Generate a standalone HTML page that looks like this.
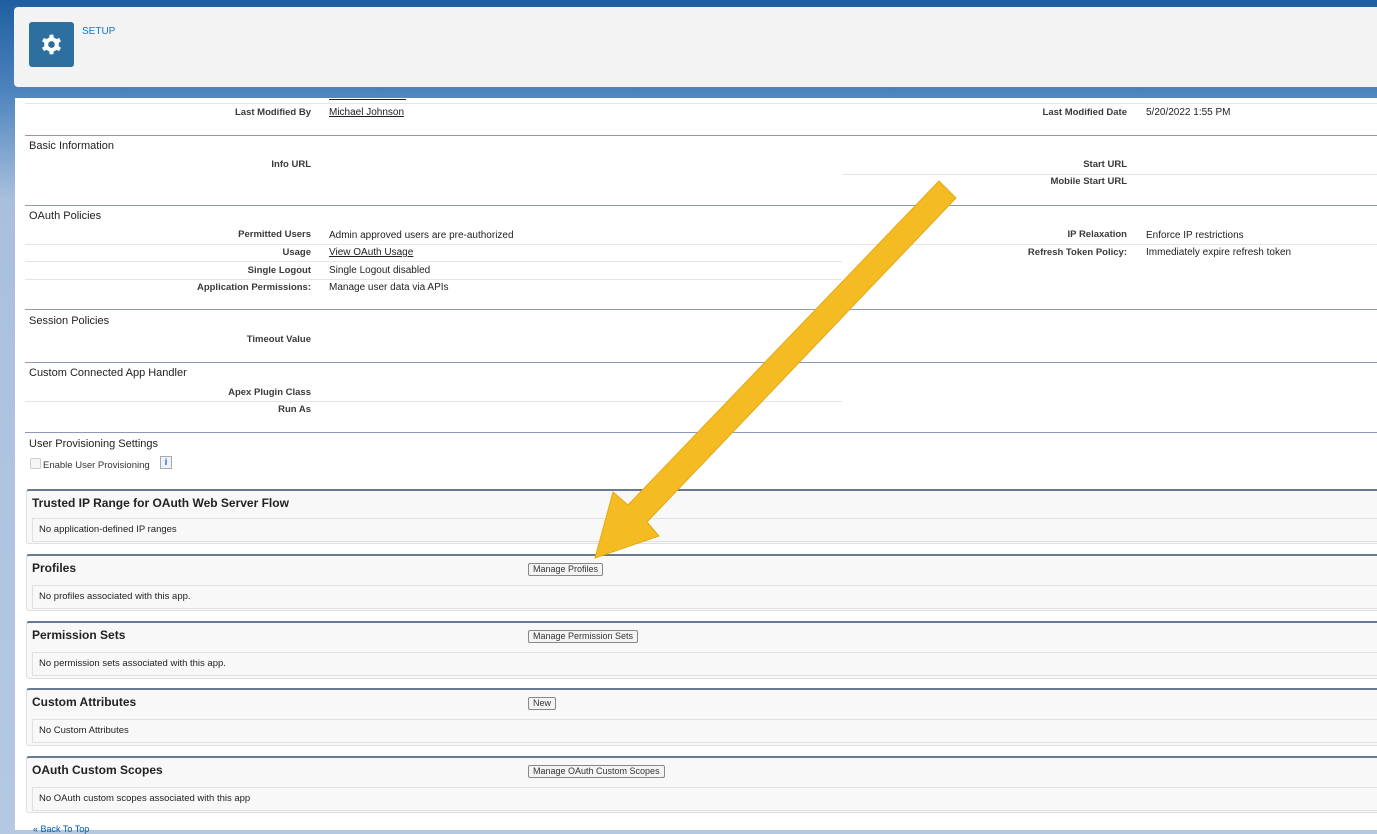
<!DOCTYPE html>
<html><head><style>
*{margin:0;padding:0;box-sizing:border-box}
html{background:#b4c8e2}
body{width:1377px;height:830px;overflow:hidden;position:relative;font-family:"Liberation Sans",Arial,sans-serif;font-size:10px;color:#222;
background:linear-gradient(180deg,#1e5f9f 0px,#4c83bd 90px,#a9c0dd 200px,#b4c8e2 830px)}
.a{position:absolute;white-space:nowrap}
.hdr{position:absolute;left:14px;top:7px;width:1370px;height:80px;background:#f3f3f3;border-radius:4px}
.panel{position:absolute;left:15px;top:98px;width:1370px;height:732px;background:#fff}
.lbl{position:absolute;text-align:right;color:#3a3a3a;font-size:9.5px;white-space:nowrap;font-weight:bold}
.val{position:absolute;font-size:10px;white-space:nowrap;color:#222}
.sec{position:absolute;left:25px;right:0;border-top:1px solid #8b9ab8}
.st{position:absolute;left:29px;font-size:11px;color:#222}
.rl{position:absolute;height:1px;background:#e4e4e4}
.box{position:absolute;left:26px;width:1360px;background:#f8f8f8;border:1px solid #e0e0e0;border-top:2px solid #6b7891;border-radius:3px}
.box h3{position:absolute;left:5px;top:5px;font-size:12px;font-weight:bold;color:#222}
.box .in{position:absolute;left:5px;right:0;top:27px;height:24px;border:1px solid #e0e0e0;background:#f8f8f8;font-size:9.5px;padding:5px 6px}
.btn{position:absolute;left:501px;top:7px;height:13px;border:1px solid #888;border-radius:2px;background:#f4f4f4;font-size:9px;padding:0 4px;line-height:11px;color:#333;white-space:nowrap}
u{text-decoration:underline}
</style></head><body>
<div class="hdr">
 <div class="a" style="left:15px;top:15px;width:45px;height:45px;background:#2d6f9f;border-radius:3px"></div>
 <svg class="a" style="left:25px;top:25px" width="25" height="25" viewBox="0 0 24 24">
  <g fill="#fff">
   <rect x="10" y="2.5" width="4" height="19" rx="1"/>
   <rect x="10" y="2.5" width="4" height="19" rx="1" transform="rotate(60 12 12)"/>
   <rect x="10" y="2.5" width="4" height="19" rx="1" transform="rotate(120 12 12)"/>
   <circle cx="12" cy="12" r="7"/>
  </g>
  <circle cx="12" cy="12" r="3.2" fill="#2d6f9f"/>
 </svg>
 <div class="a" style="left:68px;top:19px;color:#1a78c2;font-size:10px">SETUP</div>
</div>
<div class="panel"></div>
<div class="a" style="left:329px;top:99px;width:77px;height:1px;background:#222"></div>
<div class="rl" style="left:25px;right:0;top:103px"></div>
<div class="lbl" style="right:1066px;top:107px">Last Modified By</div>
<div class="val" style="left:329px;top:107px"><u>Michael Johnson</u></div>
<div class="lbl" style="right:250px;top:107px">Last Modified Date</div>
<div class="val" style="left:1146px;top:107px">5/20/2022 1:55 PM</div>

<div class="sec" style="top:135px"></div>
<div class="st" style="top:140px">Basic Information</div>
<div class="lbl" style="right:1066px;top:159px">Info URL</div>
<div class="lbl" style="right:250px;top:159px">Start URL</div>
<div class="rl" style="left:842px;right:0;top:174px"></div>
<div class="lbl" style="right:250px;top:176px">Mobile Start URL</div>

<div class="sec" style="top:205px"></div>
<div class="st" style="top:210px">OAuth Policies</div>
<div class="lbl" style="right:1066px;top:229px">Permitted Users</div>
<div class="val" style="left:329px;top:230px">Admin approved users are pre-authorized</div>
<div class="rl" style="left:25px;width:817px;top:244px"></div>
<div class="lbl" style="right:1066px;top:247px">Usage</div>
<div class="val" style="left:329px;top:247px"><u>View OAuth Usage</u></div>
<div class="rl" style="left:25px;width:817px;top:261px"></div>
<div class="lbl" style="right:1066px;top:265px">Single Logout</div>
<div class="val" style="left:329px;top:265px">Single Logout disabled</div>
<div class="rl" style="left:25px;width:817px;top:279px"></div>
<div class="lbl" style="right:1066px;top:282px">Application Permissions:</div>
<div class="val" style="left:329px;top:282px">Manage user data via APIs</div>
<div class="lbl" style="right:250px;top:229px">IP Relaxation</div>
<div class="val" style="left:1146px;top:230px">Enforce IP restrictions</div>
<div class="rl" style="left:842px;right:0;top:244px"></div>
<div class="lbl" style="right:250px;top:247px">Refresh Token Policy:</div>
<div class="val" style="left:1146px;top:247px">Immediately expire refresh token</div>

<div class="sec" style="top:309px"></div>
<div class="st" style="top:315px">Session Policies</div>
<div class="lbl" style="right:1066px;top:334px">Timeout Value</div>

<div class="sec" style="top:362px"></div>
<div class="st" style="top:367px">Custom Connected App Handler</div>
<div class="lbl" style="right:1066px;top:387px">Apex Plugin Class</div>
<div class="rl" style="left:25px;width:817px;top:401px"></div>
<div class="lbl" style="right:1066px;top:404px">Run As</div>

<div class="sec" style="top:432px"></div>
<div class="st" style="top:438px">User Provisioning Settings</div>
<div class="a" style="left:30px;top:458px;width:11px;height:11px;border:1px solid #ccc;border-radius:2px;background:#f6f6f6"></div>
<div class="a" style="left:43px;top:460px;font-size:9.5px;color:#333">Enable User Provisioning</div>
<div class="a" style="left:160px;top:456px;width:12px;height:13px;border:1px solid #aaa;background:#eef3fa;color:#1a5fb0;font-size:9px;font-weight:bold;text-align:center;line-height:11px">i</div>

<div class="box" style="top:489px;height:55px"><h3>Trusted IP Range for OAuth Web Server Flow</h3><div class="in">No application-defined IP ranges</div></div>
<div class="box" style="top:554px;height:57px"><h3>Profiles</h3><div class="btn">Manage Profiles</div><div class="in" style="top:29px">No profiles associated with this app.</div></div>
<div class="box" style="top:621px;height:58px"><h3>Permission Sets</h3><div class="btn">Manage Permission Sets</div><div class="in" style="top:29px">No permission sets associated with this app.</div></div>
<div class="box" style="top:688px;height:58px"><h3>Custom Attributes</h3><div class="btn">New</div><div class="in" style="top:29px">No Custom Attributes</div></div>
<div class="box" style="top:756px;height:57px"><h3>OAuth Custom Scopes</h3><div class="btn">Manage OAuth Custom Scopes</div><div class="in" style="top:29px">No OAuth custom scopes associated with this app</div></div>
<div class="a" style="left:33px;top:824px;font-size:9px;color:#015ba7">« Back To Top</div>

<svg class="a" style="left:0;top:0" width="1377" height="830">
<polygon points="939,181 956,198 647,522 659,536 595,558 613,492 628,505" fill="#f4bb22" stroke="#e3aa14" stroke-width="1"/>
</svg>
</body></html>
